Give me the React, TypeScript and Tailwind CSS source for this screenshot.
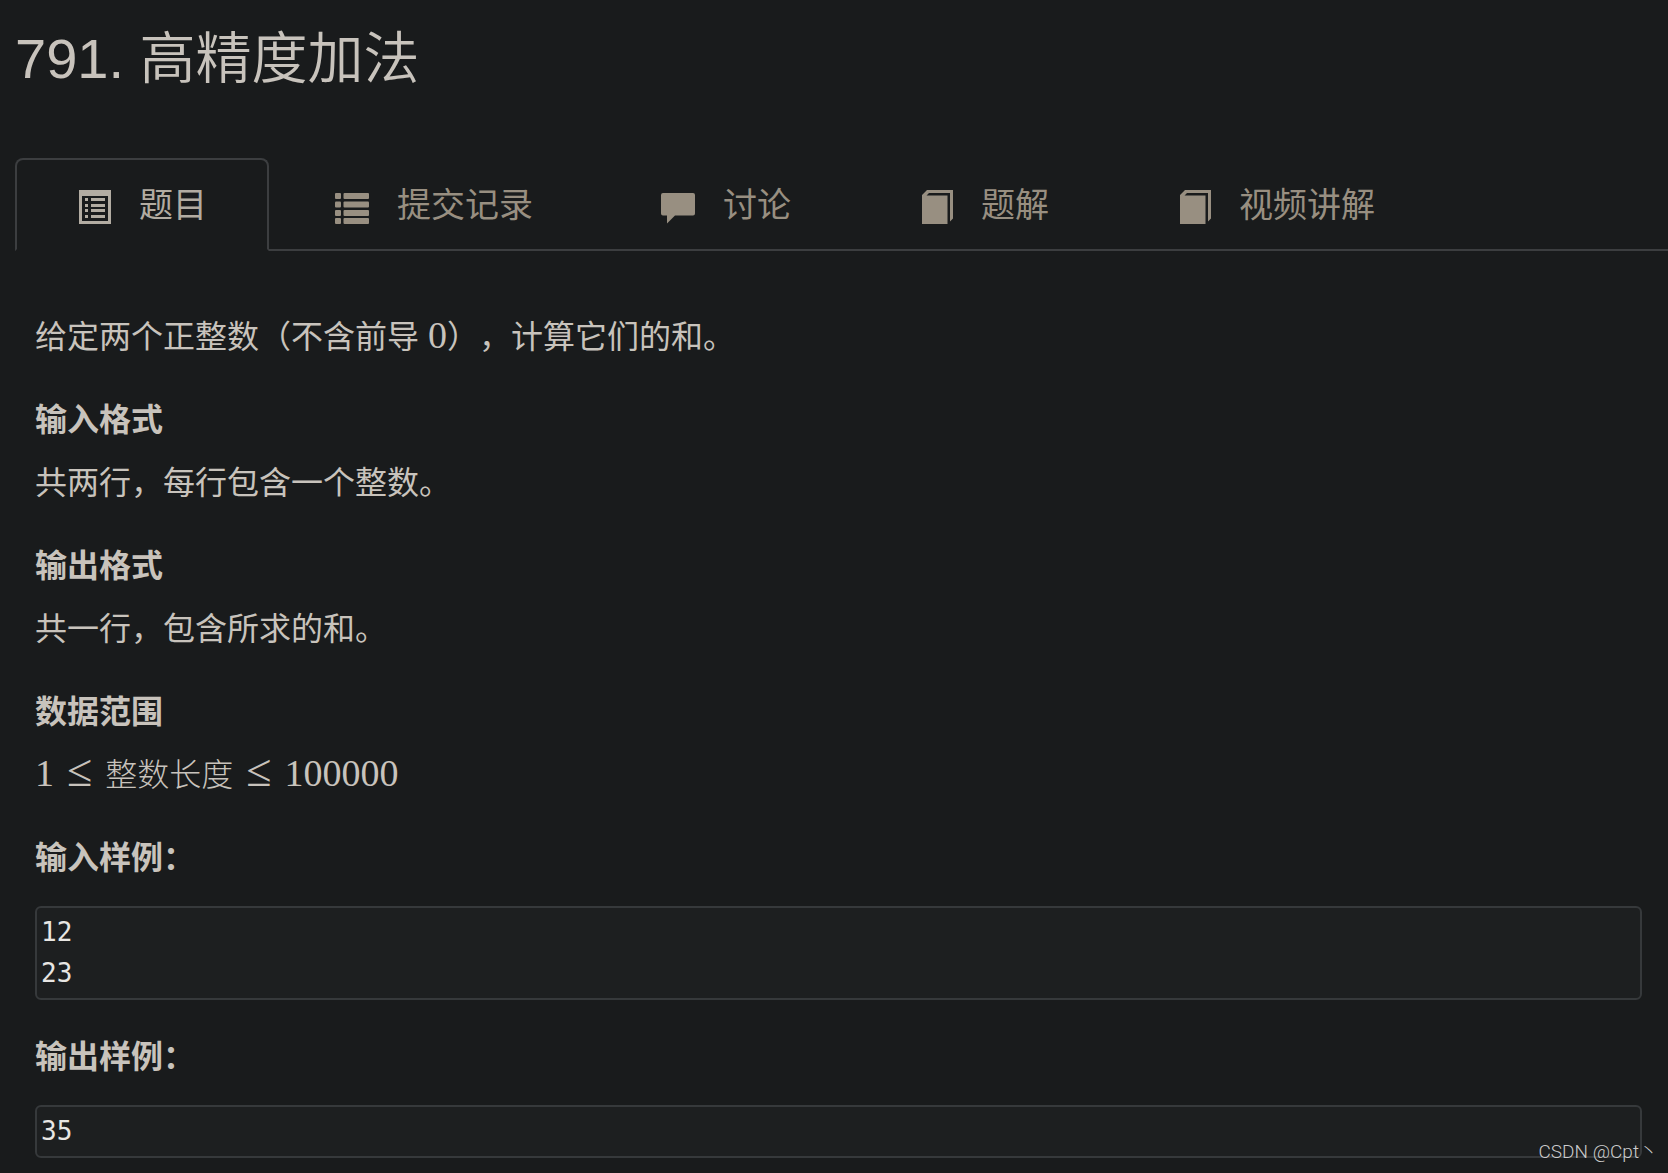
import type { ReactNode } from 'react'
import clsx from 'clsx'

function ListAltIcon() {
  return (
    <svg viewBox="0 0 34 34" className="size-[34px]" fill="currentColor" aria-hidden="true">
      <path fillRule="evenodd" d="M2 0h32v34H2zM5 6v25h26V6z" />
      <path d="M8 8h3v3H8zM8 14h3v3H8zM8 19h3v3H8zM8 25h3v3H8zM14 8h14v3H14zM14 14h14v3H14zM14 19h14v3H14zM14 25h14v3H14z" />
    </svg>
  )
}

function ListIcon() {
  return (
    <svg viewBox="0 0 34 34" className="size-[34px]" fill="currentColor" aria-hidden="true">
      {[3, 11.5, 20, 28].map((y) => (
        <g key={y}>
          <rect x="0" y={y} width="6" height="6" rx="1" />
          <rect x="8.500" y={y} width="25.500" height="6" rx="1" />
        </g>
      ))}
    </svg>
  )
}

function CommentIcon() {
  return (
    <svg viewBox="0 0 34 34" className="size-[34px]" fill="currentColor" aria-hidden="true">
      <path d="M2 3h30a2 2 0 0 1 2 2v18.500a2 2 0 0 1-2 2H14L6 33.500v-8H2a2 2 0 0 1-2-2V5a2 2 0 0 1 2-2z" />
    </svg>
  )
}

function BookIcon() {
  return (
    <svg viewBox="0 0 34 34" className="size-[34px]" fill="currentColor" aria-hidden="true">
      <path d="M3 5L8 0H34v28.500l-3 3V3H10L7.500 5.500H28.500V34H3z" />
    </svg>
  )
}

const tabs = [
  { label: '题目', icon: <ListAltIcon />, active: true },
  { label: '提交记录', icon: <ListIcon /> },
  { label: '讨论', icon: <CommentIcon /> },
  { label: '题解', icon: <BookIcon /> },
  { label: '视频讲解', icon: <BookIcon /> },
]

function Section({ title, children }: { title: string; children: ReactNode }) {
  return (
    <section className="mt-[34px]">
      <h2 className="text-[32px] leading-[46px] font-bold">{title}</h2>
      {children}
    </section>
  )
}

function Text({ children }: { children: ReactNode }) {
  return <p className="mt-[17px] mb-[37px]">{children}</p>
}

function Sample({ children }: { children: string }) {
  return (
    <pre className="mt-[25px] rounded-md border-2 border-[#36393b] bg-[#1d1f20] px-1 pt-1 pb-1 font-['DejaVu_Sans_Mono',monospace] text-[26px] leading-[41px] text-[#e8e6e3]">
      {children}
    </pre>
  )
}

function Num({ children }: { children: string }) {
  return <span className="font-['Liberation_Serif',serif] text-[38px] leading-[38px]">{children}</span>
}

function Leq() {
  return <span className="font-['Liberation_Serif',serif] text-[46px] leading-[38px]">≤</span>
}

export default function App() {
  return (
    <div className="relative min-h-screen bg-[#191b1c] pb-[14px] font-['Liberation_Sans','Noto_Sans_CJK_SC',sans-serif] text-[#c8c3bc] [text-spacing-trim:space-all]" lang="zh-CN">
      <h1 className="px-[15px] pt-7 text-[56px] leading-[62px] font-[350]">791. 高精度加法</h1>

      {/* Tabs */}
      <nav className="mt-[68px] ml-[15px] flex gap-1 border-b-2 border-[#3c3e40]">
        {tabs.map((tab) => (
          <a
            key={tab.label}
            href="#"
            className={clsx(
              '-mb-0.5 flex h-[93px] items-center gap-7 rounded-t-lg border-2 px-[60px] text-[34px] leading-[48px]',
              tab.active
                ? 'border-[#3c3e40] border-b-[#191b1c] text-[#b2aca2]'
                : 'border-transparent text-[#988f81]'
            )}
          >
            <span className="pt-[5px]">{tab.icon}</span>
            {tab.label}
          </a>
        ))}
      </nav>

      {/* Problem statement */}
      <main className="pt-[63px] pr-[26px] pl-[35px] text-[32px] leading-[46px]">
        <p className="mb-[37px]">
          给定两个正整数（不含前导 <Num>0</Num>），计算它们的和。
        </p>
        <Section title="输入格式">
          <Text>共两行，每行包含一个整数。</Text>
        </Section>
        <Section title="输出格式">
          <Text>共一行，包含所求的和。</Text>
        </Section>
        <Section title="数据范围">
          <Text>
            <span className="flex h-[46px] items-baseline gap-[13px]">
              <Num>1</Num>
              <Leq />
              <span className="leading-none font-light">整数长度</span>
              <Leq />
              <Num>100000</Num>
            </span>
          </Text>
        </Section>
        <Section title="输入样例：">
          <Sample>{'12\n23'}</Sample>
        </Section>
        <Section title="输出样例：">
          <Sample>35</Sample>
        </Section>
      </main>

      <span className="absolute right-[10px] bottom-[9px] font-[Roboto,'Noto_Sans_CJK_SC',sans-serif] text-[19px] leading-6 font-light text-[#cccccc] text-shadow-2xs">
        CSDN @Cpt丶
      </span>
    </div>
  )
}
